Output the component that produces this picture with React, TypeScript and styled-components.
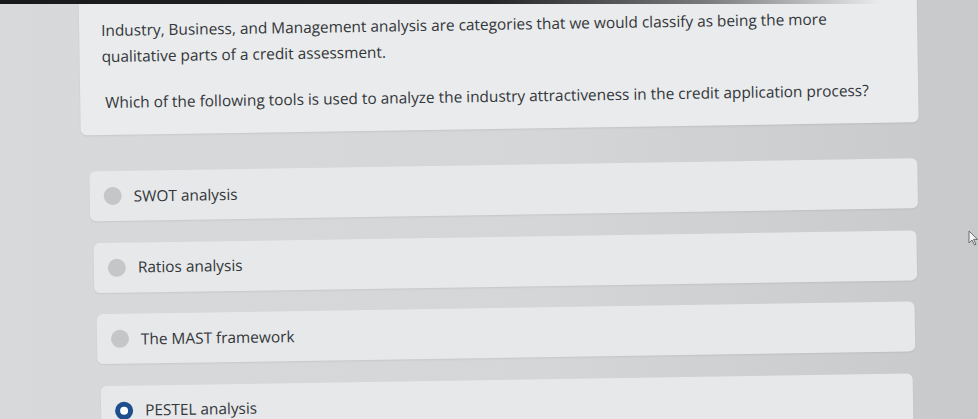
import React from "react";
import styled, { createGlobalStyle } from "styled-components";

const GlobalStyle = createGlobalStyle`
  html, body {
    margin: 0;
    padding: 0;
    height: 100%;
    overflow: hidden;
  }
  body {
    background: linear-gradient(90deg, #d7d9da 0%, #d4d6d8 55%, #c7c9cb 100%);
    font-family: "Open Sans", "Noto Sans", sans-serif;
    color: #33363a;
  }
`;

const Screen = styled.div`
  width: 978px;
  height: 419px;
  position: relative;
  overflow: hidden;
`;

// the photo is taken at a slight tilt
const Page = styled.div`
  width: 978px;
  display: flex;
  flex-direction: column;
  transform: rotate(-0.9deg);
  transform-origin: 489px 210px;
`;

const Bezel = styled.div`
  position: absolute;
  left: 0;
  top: 0;
  width: 100%;
  height: 4px;
  background: linear-gradient(90deg, #18191b 0%, #242527 50%, #77797b 72%, rgba(200, 202, 204, 0) 90%);
`;

const QuestionCard = styled.div`
  margin: -6px 0 0 82px;
  width: 838px;
  box-sizing: border-box;
  padding: 18px 18px 19px 22px;
  background: #e9ebec;
  border-radius: 0 0 6px 6px;
  box-shadow: 0 1px 2px rgba(0, 0, 0, 0.08);
`;

const Paragraph = styled.p<{ $gap?: number; $indent?: number }>`
  margin: ${({ $gap }) => $gap ?? 0}px 0 0 ${({ $indent }) => $indent ?? 0}px;
  font-size: 15.4px;
  line-height: 26px;
  color: #33363a;
`;

const Options = styled.div`
  margin-top: 36px;
  display: flex;
  flex-direction: column;
  gap: 21.5px;
`;

const OptionCard = styled.label<{ $indent: number; $width: number }>`
  margin-left: ${({ $indent }) => $indent}px;
  width: ${({ $width }) => $width}px;
  height: 50px;
  box-sizing: border-box;
  padding-left: 14px;
  display: flex;
  align-items: center;
  gap: 12px;
  background: #e6e8e9;
  border-radius: 6px;
  box-shadow: 0 1px 2px rgba(0, 0, 0, 0.07);
  cursor: pointer;
`;

const Radio = styled.span<{ $checked: boolean }>`
  width: 18px;
  height: 18px;
  flex: none;
  border-radius: 50%;
  box-sizing: border-box;
  background: ${({ $checked }) => ($checked ? "#ffffff" : "#c4c6c8")};
  border: ${({ $checked }) => ($checked ? "5px solid #1d4f8e" : "none")};
`;

const OptionText = styled.span`
  font-size: 15.4px;
  color: #33363a;
`;

const Cursor = styled.svg`
  position: absolute;
  left: 968px;
  top: 230px;
`;

const options = [
  { text: "SWOT analysis", indent: 90, width: 828, checked: false },
  { text: "Ratios analysis", indent: 93, width: 823, checked: false },
  { text: "The MAST framework", indent: 95, width: 818, checked: false },
  { text: "PESTEL analysis", indent: 98, width: 812, checked: true },
];

const App = () => {
  return (
    <>
      <GlobalStyle />
      <Screen>
        <Page>
          <QuestionCard>
            <Paragraph>
              Industry, Business, and Management analysis are categories that we would classify as being the more
              qualitative parts of a credit assessment.
            </Paragraph>
            <Paragraph $gap={20} $indent={3}>
              Which of the following tools is used to analyze the industry attractiveness in the credit application process?
            </Paragraph>
          </QuestionCard>
          <Options>
            {options.map((o) => (
              <OptionCard key={o.text} $indent={o.indent} $width={o.width}>
                <Radio $checked={o.checked} />
                <OptionText>{o.text}</OptionText>
              </OptionCard>
            ))}
          </Options>
        </Page>
        <Bezel />
        <Cursor width="10" height="16" viewBox="0 0 10 16">
          <path d="M1 1 L1 13 L4 10 L6.5 15 L8 14.3 L5.6 9.4 L9.5 9.4 Z" fill="#f4f4f4" stroke="#6a6c6e" strokeWidth="1" />
        </Cursor>
      </Screen>
    </>
  );
};

export default App;
